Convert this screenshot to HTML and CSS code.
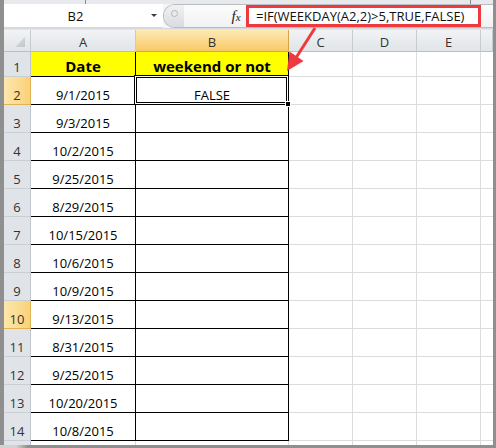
FILE: index.html
```html
<!DOCTYPE html>
<html>
<head>
<meta charset="utf-8">
<link rel="stylesheet" href="styles.css">
</head>
<body>
<div class="window">
  <div class="app">
    <div class="topstrip"><span class="tick tick1"></span><span class="tick tick2"></span></div>
    <div class="fbar">
      <div class="namebox"><span class="ref">B2</span><span class="dd"></span></div>
      <div class="fxarea">
        <span class="split"><span class="dot"></span></span>
        <span class="fx"><span class="f">f</span><span class="x">x</span></span>
        <div class="formula">=IF(WEEKDAY(A2,2)&gt;5,TRUE,FALSE)</div>
      </div>
    </div>
    <div class="sep"></div>
    <div class="grid">
      <div class="ch corner"></div><div class="ch">A</div><div class="ch hl">B</div><div class="ch">C</div><div class="ch">D</div><div class="ch">E</div><div class="ch last"></div>

      <div class="rh">1</div><div class="c t y hd">Date</div><div class="c t y hd">weekend or not</div><div class="c"></div><div class="c"></div><div class="c"></div><div class="c last"></div>

      <div class="rh hl">2</div><div class="c t">9/1/2015</div><div class="c t">FALSE</div><div class="c"></div><div class="c"></div><div class="c"></div><div class="c last"></div>
      <div class="rh">3</div><div class="c t">9/3/2015</div><div class="c t"></div><div class="c"></div><div class="c"></div><div class="c"></div><div class="c last"></div>
      <div class="rh">4</div><div class="c t">10/2/2015</div><div class="c t"></div><div class="c"></div><div class="c"></div><div class="c"></div><div class="c last"></div>
      <div class="rh">5</div><div class="c t">9/25/2015</div><div class="c t"></div><div class="c"></div><div class="c"></div><div class="c"></div><div class="c last"></div>
      <div class="rh">6</div><div class="c t">8/29/2015</div><div class="c t"></div><div class="c"></div><div class="c"></div><div class="c"></div><div class="c last"></div>
      <div class="rh">7</div><div class="c t">10/15/2015</div><div class="c t"></div><div class="c"></div><div class="c"></div><div class="c"></div><div class="c last"></div>
      <div class="rh">8</div><div class="c t">10/6/2015</div><div class="c t"></div><div class="c"></div><div class="c"></div><div class="c"></div><div class="c last"></div>
      <div class="rh">9</div><div class="c t">10/9/2015</div><div class="c t"></div><div class="c"></div><div class="c"></div><div class="c"></div><div class="c last"></div>
      <div class="rh hl">10</div><div class="c t">9/13/2015</div><div class="c t"></div><div class="c"></div><div class="c"></div><div class="c"></div><div class="c last"></div>
      <div class="rh">11</div><div class="c t">8/31/2015</div><div class="c t"></div><div class="c"></div><div class="c"></div><div class="c"></div><div class="c last"></div>
      <div class="rh">12</div><div class="c t">9/25/2015</div><div class="c t"></div><div class="c"></div><div class="c"></div><div class="c"></div><div class="c last"></div>
      <div class="rh">13</div><div class="c t">10/20/2015</div><div class="c t"></div><div class="c"></div><div class="c"></div><div class="c"></div><div class="c last"></div>
      <div class="rh">14</div><div class="c t">10/8/2015</div><div class="c t"></div><div class="c"></div><div class="c"></div><div class="c"></div><div class="c last"></div>

      <div class="rh"></div><div class="c"></div><div class="c"></div><div class="c"></div><div class="c"></div><div class="c"></div><div class="c last"></div>
    </div>
  </div>
  <div class="bottombar"></div>
  <div class="sel"></div>
  <div class="handle"></div>
  <svg class="arrow" width="496" height="448" viewBox="0 0 496 448">
    <line x1="296.5" y1="57" x2="315" y2="28" stroke="#ee3a3f" stroke-width="3"/>
    <polygon points="287,71 289.5,51.5 303.5,61" fill="#ee3a3f"/>
  </svg>
</div>
</body>
</html>
```

FILE: styles.css
```css
body {
  margin: 0;
}

.window {
  position: relative;
  width: 496px;
  height: 448px;
  background: #8f8f8f;
  overflow: hidden;
  font-family: "Open Sans", "Liberation Sans", sans-serif;
  color: #000;
}

.app {
  margin-left: 4px;
  width: 489px;
  height: 445px;
  background: #fff;
  display: flex;
  flex-direction: column;
  overflow: hidden;
}

.topstrip {
  height: 4px;
  flex: none;
  background: #e7e9ec;
  position: relative;
}

.tick {
  position: absolute;
  top: 0;
  width: 1px;
  height: 4px;
  background: #8a8a8a;
}

.tick1 { left: 81px; }
.tick2 { left: 466px; }

.fbar {
  height: 24px;
  flex: none;
  display: flex;
  background: #f4f5f7;
}

.namebox {
  width: 159px;
  flex: none;
  background: #fff;
  display: flex;
  align-items: center;
  border-bottom: 1px solid #d6d9dd;
  box-sizing: border-box;
}

.ref {
  width: 143px;
  text-align: center;
  font-size: 13px;
  line-height: 18px;
  color: #111;
}

.dd {
  width: 0;
  height: 0;
  margin-left: 4px;
  border-left: 3px solid transparent;
  border-right: 3px solid transparent;
  border-top: 3px solid #3c3c3c;
}

.fxarea {
  flex: 1;
  display: flex;
  align-items: center;
  border: 1px solid #b9bcc1;
  border-right: none;
  border-radius: 12px 0 0 12px;
  background: linear-gradient(#fcfcfc, #f1f2f4);
  box-sizing: border-box;
  height: 24px;
}

.split {
  width: 20px;
  height: 22px;
  flex: none;
  border-radius: 11px 0 0 11px;
  background: linear-gradient(#f0f1f3, #d9dce0);
  display: flex;
  align-items: center;
  justify-content: center;
}

.dot {
  width: 7px;
  height: 7px;
  border-radius: 50%;
  border: 1px solid #b3b6ba;
  background: #e9eaec;
  box-sizing: border-box;
  margin-top: -6px;
}

.fx {
  width: 20px;
  margin-left: 42px;
  flex: none;
  text-align: center;
  font-family: "Liberation Serif", serif;
  font-style: italic;
  color: #222;
  line-height: 18px;
}

.fx .f {
  font-size: 15px;
}

.fx .x {
  font-size: 11px;
}

.formula {
  width: 235px;
  height: 22px;
  flex: none;
  box-sizing: border-box;
  border: 3px solid #ee3a3f;
  background: #fff;
  font-size: 13px;
  line-height: 16px;
  padding-left: 7px;
  color: #111;
  white-space: nowrap;
}

.sep {
  height: 2px;
  flex: none;
  background: linear-gradient(#cfd3d8, #e9ecef);
}

.grid {
  display: grid;
  grid-template-columns: 27px 105px 153px 64px 64px 64px 12px;
  grid-template-rows: 22px 25px repeat(13, 28px) 20px;
}

.grid > div {
  box-sizing: border-box;
  display: flex;
  justify-content: center;
  white-space: nowrap;
}

.ch {
  background: linear-gradient(#f1f3f5, #e1e4e8);
  border-right: 1px solid #c6cbd1;
  border-bottom: 1px solid #b9bfc6;
  align-items: center;
  padding-top: 2px;
  font-size: 13px;
  line-height: 16px;
  color: #333;
}

.ch.hl {
  background: linear-gradient(#fde9b5, #f8ca68);
  border-right-color: #d6a44a;
  border-bottom-color: #d6a44a;
}

.corner {
  position: relative;
}

.corner::after {
  content: "";
  position: absolute;
  left: 11px;
  top: 7px;
  width: 10px;
  height: 10px;
  background: linear-gradient(135deg, #dcdfe3, #c2c6cb);
  clip-path: polygon(100% 0, 100% 100%, 0 100%);
}

.rh {
  background: #e0e4e9;
  border-right: 1px solid #c0c6cd;
  border-bottom: 1px solid #c9ced4;
  align-items: flex-end;
  padding-bottom: 1px;
  font-size: 13px;
  line-height: 16px;
  color: #333;
}

.rh.hl {
  background: linear-gradient(90deg, #fde7ad, #f9d27a);
  border-right-color: #e2b352;
  border-bottom-color: #e2b352;
}

.c {
  border-right: 1px solid #dadcde;
  border-bottom: 1px solid #dadcde;
  align-items: flex-end;
  padding-bottom: 1px;
  font-size: 13px;
  line-height: 16px;
}

.c.last {
  border-right: none;
}

.c.t {
  border-right-color: #000;
  border-bottom-color: #000;
}

.c.y {
  background: #ffff00;
}

.c.hd {
  font-weight: 700;
  font-size: 15px;
  line-height: 18px;
}

.bottombar {
  position: absolute;
  left: 0;
  bottom: 0;
  width: 496px;
  height: 3px;
  background: linear-gradient(90deg, #d2d2d2 0, #d2d2d2 16px, #8f8f8f 28px);
}

.sel {
  position: absolute;
  left: 134px;
  top: 75px;
  width: 155px;
  height: 30px;
  box-sizing: border-box;
  border: 1px solid #000;
  box-shadow: inset 0 0 0 1px #fff, inset 0 0 0 2px #000;
}

.handle {
  position: absolute;
  left: 285px;
  top: 101px;
  width: 6px;
  height: 6px;
  box-sizing: border-box;
  background: #000;
  border: 1px solid #fff;
}

.arrow {
  position: absolute;
  left: 0;
  top: 0;
  pointer-events: none;
}
```
